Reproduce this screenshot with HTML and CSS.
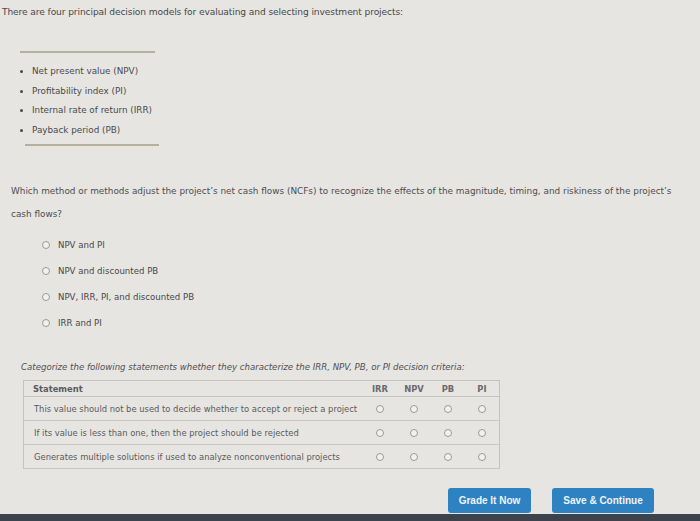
FILE: index.html
```html
<!DOCTYPE html>
<html>
<head>
<meta charset="utf-8">
<link rel="stylesheet" href="styles.css">
</head>
<body>
<div class="page">
  <p class="intro">There are four principal decision models for evaluating and selecting investment projects:</p>
  <div class="rule rule-top"></div>
  <ul class="models">
    <li>Net present value (NPV)</li>
    <li>Profitability index (PI)</li>
    <li>Internal rate of return (IRR)</li>
    <li>Payback period (PB)</li>
  </ul>
  <div class="rule rule-bottom"></div>

  <p class="question">Which method or methods adjust the project’s net cash flows (NCFs) to recognize the effects of the magnitude, timing, and riskiness of the project’s cash flows?</p>

  <div class="options">
    <label class="opt"><span class="radio"></span>NPV and PI</label>
    <label class="opt"><span class="radio"></span>NPV and discounted PB</label>
    <label class="opt"><span class="radio"></span>NPV, IRR, PI, and discounted PB</label>
    <label class="opt"><span class="radio"></span>IRR and PI</label>
  </div>

  <p class="categorize">Categorize the following statements whether they characterize the IRR, NPV, PB, or PI decision criteria:</p>

  <table class="grid">
    <thead>
      <tr><th class="stmt">Statement</th><th>IRR</th><th>NPV</th><th>PB</th><th>PI</th></tr>
    </thead>
    <tbody>
      <tr><td class="stmt">This value should not be used to decide whether to accept or reject a project</td><td><span class="radio"></span></td><td><span class="radio"></span></td><td><span class="radio"></span></td><td><span class="radio"></span></td></tr>
      <tr><td class="stmt">If its value is less than one, then the project should be rejected</td><td><span class="radio"></span></td><td><span class="radio"></span></td><td><span class="radio"></span></td><td><span class="radio"></span></td></tr>
      <tr><td class="stmt">Generates multiple solutions if used to analyze nonconventional projects</td><td><span class="radio"></span></td><td><span class="radio"></span></td><td><span class="radio"></span></td><td><span class="radio"></span></td></tr>
    </tbody>
  </table>

  <div class="actions">
    <button class="btn">Grade It Now</button>
    <button class="btn btn-wide">Save &amp; Continue</button>
  </div>
</div>
<div class="footer-bar"></div>
</body>
</html>
```
FILE: styles.css
```css
html, body {
  margin: 0;
  padding: 0;
}
body {
  width: 700px;
  height: 521px;
  overflow: hidden;
  background: #e6e5e1;
  font-family: "DejaVu Sans", Verdana, sans-serif;
  color: #4a4a4c;
  display: flex;
  flex-direction: column;
}
.page {
  flex: 1;
  padding: 7px 0 0 2px;
}
.intro {
  margin: 0;
  font-size: 9.1px;
  letter-spacing: -0.1px;
  color: #48484a;
}
.rule {
  height: 2px;
  background: #b4b19f;
}
.rule-top {
  width: 135px;
  margin: 34px 0 0 18px;
}
.rule-bottom {
  width: 134px;
  margin: 4px 0 0 23px;
}
.models {
  margin: 9px 0 0 0;
  padding: 0 0 0 30px;
  font-size: 8.8px;
  list-style: disc;
}
.models li {
  line-height: 19.5px;
}
.question {
  margin: 34px 0 0 9px;
  width: 662px;
  font-size: 8.9px;
  line-height: 23px;
  color: #4d4d50;
}
.options {
  margin: 12px 0 0 40px;
  display: flex;
  flex-direction: column;
  gap: 13px;
}
.opt {
  display: flex;
  align-items: center;
  gap: 8px;
  font-size: 8.6px;
  height: 13px;
  color: #48484b;
}
.radio {
  display: inline-block;
  width: 8px;
  height: 8px;
  border: 1px solid #9a9a9a;
  border-radius: 50%;
  background: #f1f1ef;
  box-sizing: border-box;
}
.categorize {
  margin: 33px 0 0 19px;
  font-size: 8.6px;
  font-style: italic;
  color: #505055;
}
.grid {
  margin: 8px 0 0 21px;
  width: 477px;
  border-collapse: collapse;
  border: 1px solid #c4c3bd;
  font-size: 8.4px;
}
.grid th {
  height: 15px;
  font-weight: bold;
  color: #6a6a6e;
  text-align: center;
  border-bottom: 1px solid #c4c3bd;
  padding: 0;
  width: 34px;
}
.grid th.stmt {
  text-align: left;
  padding-left: 9px;
  width: auto;
  color: #5c5c60;
}
.grid td {
  height: 23px;
  text-align: center;
  border-bottom: 1px solid #c8c7c1;
  padding: 0;
}
.grid td .radio {
  vertical-align: middle;
}
.grid td.stmt {
  text-align: left;
  padding-left: 10px;
  color: #5a5a5e;
}
.actions {
  display: flex;
  justify-content: flex-end;
  gap: 21px;
  margin: 19px 46px 0 0;
}
.btn {
  font-family: "Liberation Sans", Arial, sans-serif;
  font-weight: bold;
  font-size: 10px;
  color: #eef4fa;
  background: #2e82c2;
  border: none;
  border-radius: 3px;
  height: 25px;
  width: 83px;
  padding: 0;
}
.btn-wide {
  width: 102px;
}
.footer-bar {
  height: 7px;
  background: #3c434d;
}
```
